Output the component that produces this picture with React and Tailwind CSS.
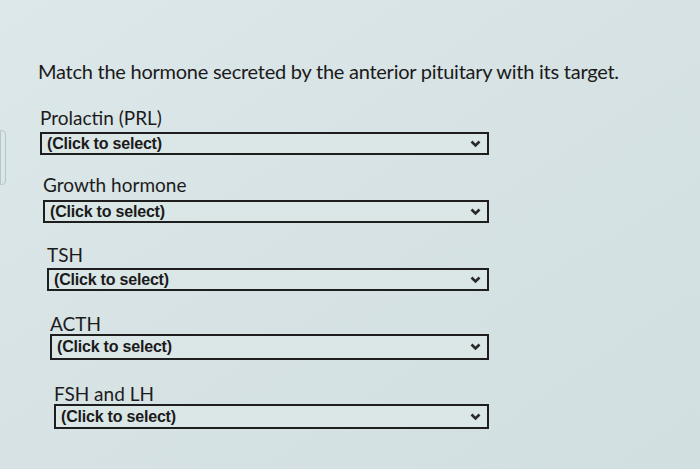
import React from 'react';

// the photo is slightly skewed, so each row starts a little further right
const items = [
    { label: 'Prolactin (PRL)', row: 'mt-[25px] ml-[40px]', box: 'mt-[4px] h-[23px] w-[449px]' },
    { label: 'Growth hormone', row: 'mt-[20px] ml-[43px]', box: 'mt-[5px] h-[23px] w-[446px]' },
    { label: 'TSH', row: 'mt-[22px] ml-[47px]', box: 'mt-[3px] h-[23px] w-[442px]' },
    { label: 'ACTH', row: 'mt-[23px] ml-[50px]', box: 'mt-0 h-[26px] w-[439px]' },
    { label: 'FSH and LH', row: 'mt-[24px] ml-[54px]', box: 'mt-0 h-[25px] w-[435px]' },
];

function Chevron() {
    return (
        <svg width="11" height="8" viewBox="0 0 11 8" className="mr-[6px]">
            <path d="M1.5 1.5 L5.5 5.5 L9.5 1.5" fill="none" stroke="#2a2a2a" strokeWidth="2.6" />
        </svg>
    );
}

function SelectRow({ label, row, box }) {
    return (
        <div className={`${row} w-fit`}>
            <div className="font-['Lato','Liberation_Sans',sans-serif] text-[19px] leading-[20px] text-[#1c1c1c]">{label}</div>
            <div className={`${box} flex items-center justify-between border-2 border-[#1e1e1e] bg-[#dbe6e7]`}>
                <span className="pl-[5px] font-['Liberation_Sans',Arial,sans-serif] text-[16px] font-bold tracking-[-0.2px] text-[#1a1a1a]">(Click to select)</span>
                <Chevron />
            </div>
        </div>
    );
}

export default function App() {
    return (
        <div className="relative h-[469px] w-[700px] overflow-hidden bg-gradient-to-br from-[#dde8ea] via-[#d6e2e3] to-[#d2dfe0]">
            <div className="absolute left-0 top-[130px] h-[55px] w-[6px] rounded-r-sm border border-[#b9c6c8]" />
            <div className="flex flex-col pt-[59px]">
                <div className="ml-[38px] font-['Lato','Liberation_Sans',sans-serif] text-[20px] leading-[24px] tracking-[-0.25px] text-[#1a1a1a]">
                    Match the hormone secreted by the anterior pituitary with its target.
                </div>
                {items.map((it) => (
                    <SelectRow key={it.label} {...it} />
                ))}
            </div>
        </div>
    );
}
